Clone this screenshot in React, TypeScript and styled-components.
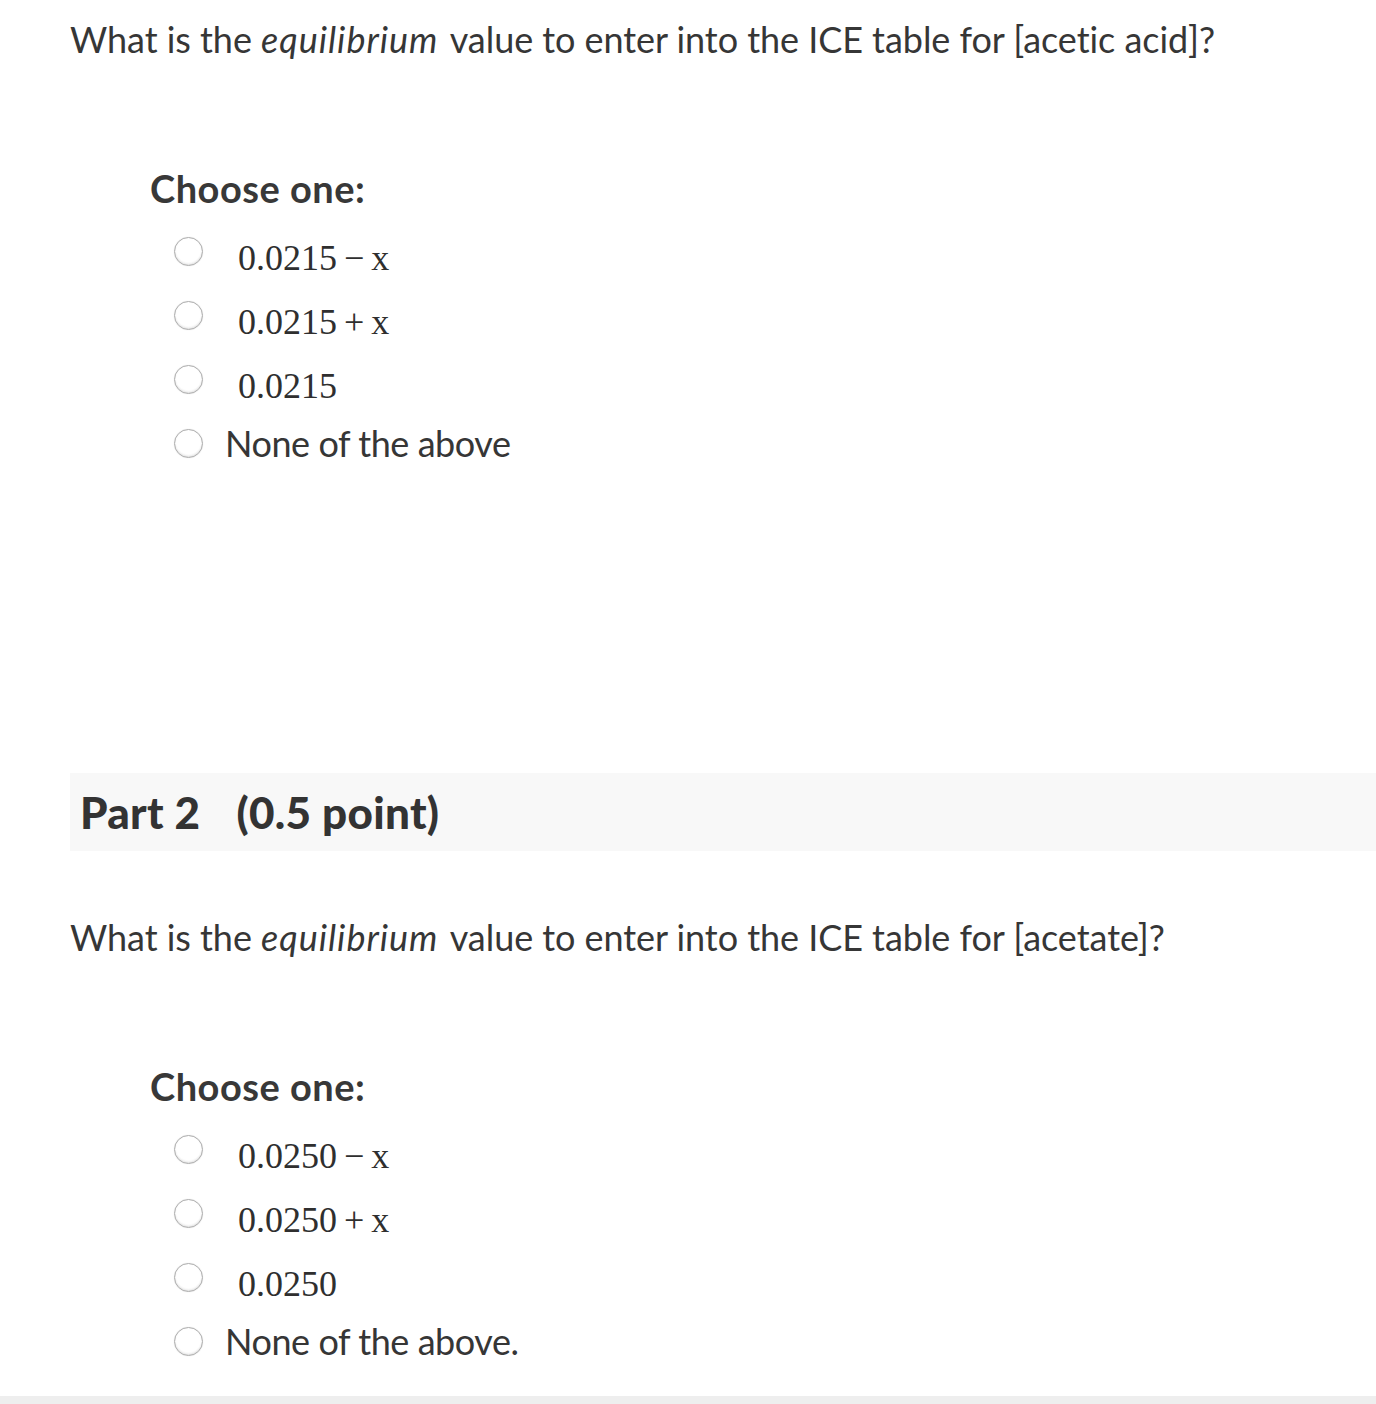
import React from "react";
import styled, { createGlobalStyle } from "styled-components";

const GlobalStyle = createGlobalStyle`
  html, body {
    margin: 0;
    padding: 0;
    background: #ffffff;
  }
  body {
    font-family: "Lato", "Liberation Sans", sans-serif;
    color: #363636;
  }
`;

const Page = styled.div`
  padding-top: 14px;
  display: flex;
  flex-direction: column;
`;

const Question = styled.div<{ $top?: number }>`
  margin: ${(p) => p.$top ?? 0}px 0 0 70px;
  font-size: 36px;
  line-height: 50px;
  font-weight: 400;
  letter-spacing: -0.05px;

  em {
    font-style: italic;
    letter-spacing: 1px;
    margin-right: 3px;
  }
`;

const Choices = styled.div`
  margin: 99px 0 0 150px;
`;

const ChooseLabel = styled.div`
  font-size: 38px;
  line-height: 50px;
  font-weight: 700;
  letter-spacing: 0.5px;
  color: #383838;
`;

const OptionList = styled.ul`
  list-style: none;
  margin: 6px 0 0;
  padding: 0 0 0 24px;
`;

const Option = styled.li`
  height: 64px;
  display: flex;
  align-items: center;
  gap: 22px;
`;

const Radio = styled.span`
  width: 27px;
  height: 27px;
  flex: none;
  border-radius: 50%;
  border: 1px solid #ababab;
  background: radial-gradient(circle at 50% 40%, #ffffff 60%, #efefef 100%);
  box-shadow: inset 0 -1px 2px rgba(0, 0, 0, 0.1), 0 0 1px rgba(0, 0, 0, 0.15);
`;

const Math = styled.span`
  font-family: "Liberation Serif", "Times New Roman", serif;
  font-size: 36px;
  line-height: 40px;
  margin-left: 13px;
  padding-top: 14px;
  color: #2f2f2f;
  word-spacing: -2px;
`;

const Text = styled.span`
  font-size: 36px;
  line-height: 40px;
  letter-spacing: -0.45px;
`;

const PartBand = styled.div`
  margin: 298px 0 0 70px;
  height: 78px;
  background: #f8f8f8;
  display: flex;
  align-items: center;
  padding-left: 10px;
  font-size: 44px;
  font-weight: 900;
  letter-spacing: 0.3px;
  color: #333333;
`;

const PartPoints = styled.span`
  margin-left: 36px;
`;

const BottomBar = styled.div`
  margin-top: 23px;
  height: 10px;
  background: #eeeeee;
`;

type Choice = { math?: string; text?: string };

const ChoiceBlock = ({ items }: { items: Choice[] }) => (
  <Choices>
    <ChooseLabel>Choose one:</ChooseLabel>
    <OptionList>
      {items.map((c, i) => (
        <Option key={i}>
          <Radio />
          {c.math ? <Math>{c.math}</Math> : <Text>{c.text}</Text>}
        </Option>
      ))}
    </OptionList>
  </Choices>
);

const part1: Choice[] = [
  { math: "0.0215 − x" },
  { math: "0.0215 + x" },
  { math: "0.0215" },
  { text: "None of the above" },
];

const part2: Choice[] = [
  { math: "0.0250 − x" },
  { math: "0.0250 + x" },
  { math: "0.0250" },
  { text: "None of the above." },
];

export default function App() {
  return (
    <Page>
      <GlobalStyle />
      <Question>
        What is the <em>equilibrium</em> value to enter into the ICE table for [acetic acid]?
      </Question>
      <ChoiceBlock items={part1} />

      <PartBand>
        Part 2<PartPoints>(0.5 point)</PartPoints>
      </PartBand>

      <Question $top={61}>
        What is the <em>equilibrium</em> value to enter into the ICE table for [acetate]?
      </Question>
      <ChoiceBlock items={part2} />

      <BottomBar />
    </Page>
  );
}
